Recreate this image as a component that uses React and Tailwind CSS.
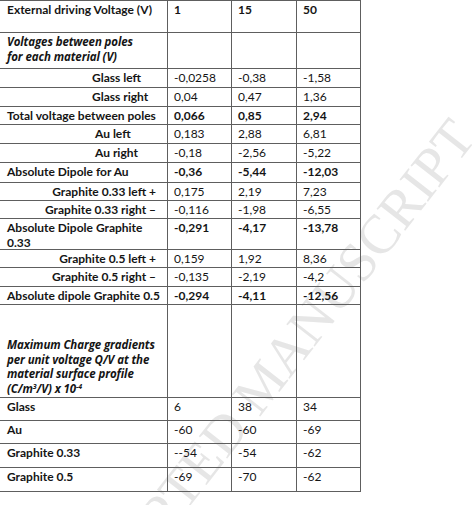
import React from "react";

const rows = [
  { h: "h-[36px]", label: <span className="font-bold italic font-['Open_Sans',sans-serif] text-[11.5px] tracking-[-0.1px]">Voltages between poles<br />for each material (V)</span>, vals: ["", "", ""] },
  { h: "h-[19px]", label: "Glass left", pad: "pl-[92px]", bold: true, vals: ["-0,0258", "-0,38", "-1,58"] },
  { h: "h-[19px]", label: "Glass right", pad: "pl-[92px]", bold: true, vals: ["0,04", "0,47", "1,36"] },
  { h: "h-[18px]", label: "Total voltage between poles", bold: true, vb: true, vals: ["0,066", "0,85", "2,94"] },
  { h: "h-[19px]", label: "Au left", pad: "pl-[95px]", bold: true, vals: ["0,183", "2,88", "6,81"] },
  { h: "h-[19px]", label: "Au right", pad: "pl-[95px]", bold: true, vals: ["-0,18", "-2,56", "-5,22"] },
  { h: "h-[20px]", label: "Absolute Dipole for Au", bold: true, vb: true, vals: ["-0,36", "-5,44", "-12,03"] },
  { h: "h-[18px]", label: "Graphite 0.33 left +", right: true, bold: true, vals: ["0,175", "2,19", "7,23"] },
  { h: "h-[18px]", label: "Graphite 0.33 right \u2013", right: true, bold: true, vals: ["-0,116", "-1,98", "-6,55"] },
  { h: "h-[31px]", label: <>Absolute Dipole Graphite<br />0.33</>, bold: true, vb: true, vals: ["-0,291", "-4,17", "-13,78"] },
  { h: "h-[18px]", label: "Graphite 0.5 left +", right: true, bold: true, vals: ["0,159", "1,92", "8,36"] },
  { h: "h-[19px]", label: "Graphite 0.5 right \u2013", right: true, bold: true, vals: ["-0,135", "-2,19", "-4,2"] },
  { h: "h-[18px]", label: "Absolute dipole Graphite 0.5", bold: true, vb: true, vals: ["-0,294", "-4,11", "-12,56"] },
  {
    h: "h-[93px]",
    top: "pt-[33px]",
    label: (
      <span className="font-bold italic font-['Open_Sans',sans-serif] text-[11.5px] tracking-[-0.1px]">
        Maximum Charge gradients<br />per unit voltage Q/V at the<br />material surface profile<br />
        (C/m<sup className="text-[7px]">3</sup>/V) x 10<sup className="text-[7px]">-4</sup>
      </span>
    ),
    vals: ["", "", ""],
  },
  { h: "h-[23px]", label: "Glass", bold: true, vals: ["6", "38", "34"] },
  { h: "h-[23px]", label: "Au", bold: true, vals: ["-60", "-60", "-69"] },
  { h: "h-[24px]", label: "Graphite 0.33", bold: true, vals: ["--54", "-54", "-62"] },
  { h: "h-[24px]", label: "Graphite 0.5", bold: true, vals: ["-69", "-70", "-62"] },
];

export default function App() {
  return (
    <div className="relative w-[474px] h-[505px] overflow-hidden bg-white text-[#151515] text-[12px] leading-[14.5px] font-['Lato',sans-serif]">
      <span className="absolute left-[262px] top-[384px] -translate-x-1/2 -translate-y-1/2 -rotate-[52deg] whitespace-nowrap text-[55px] leading-none text-[#e6e6e6] font-['Liberation_Serif',serif] select-none">
        ACCEPTED MANUSCRIPT
      </span>
      <div className="relative grid grid-cols-[168px_64px_65px_64px] w-[361px] border-t border-[#5e5e5e]">
        <div className="h-[32px] border-r border-b border-[#5e5e5e] pl-[7px] pt-[2px] font-bold whitespace-nowrap">External driving Voltage (V)</div>
        <div className="h-[32px] border-r border-b border-[#5e5e5e] pl-[6px] pt-[2px] font-bold">1</div>
        <div className="h-[32px] border-r border-b border-[#5e5e5e] pl-[6px] pt-[2px] font-bold">15</div>
        <div className="h-[32px] border-r border-b border-[#5e5e5e] pl-[6px] pt-[2px] font-bold">50</div>
        {rows.map((r, i) => (
          <React.Fragment key={i}>
            <div
              className={`${r.h} border-r border-b border-[#5e5e5e] whitespace-nowrap ${r.top || "pt-[2px]"} ${r.bold ? "font-bold" : ""} ${r.right ? "text-right pr-[11px]" : r.pad || "pl-[7px]"}`}
            >
              {r.label}
            </div>
            {r.vals.map((v, j) => (
              <div key={j} className={`${r.h} border-r border-b border-[#5e5e5e] pl-[6px] pt-[2px] ${r.vb ? "font-bold" : ""}`}>
                {v}
              </div>
            ))}
          </React.Fragment>
        ))}
      </div>
    </div>
  );
}
